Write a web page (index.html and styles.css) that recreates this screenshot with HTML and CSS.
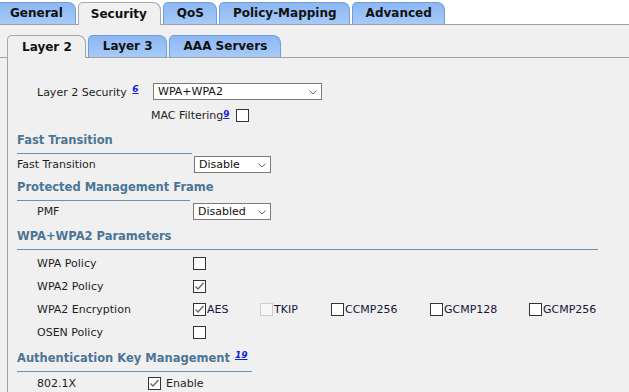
FILE: index.html
```html
<!DOCTYPE html>
<html>
<head>
<meta charset="utf-8">
<link rel="stylesheet" href="styles.css">
</head>
<body>
<div class="tabbar">
  <div class="tab first">General</div>
  <div class="tab active">Security</div>
  <div class="tab">QoS</div>
  <div class="tab">Policy-Mapping</div>
  <div class="tab">Advanced</div>
</div>
<div class="panel">
  <div class="subtabbar">
    <div class="stab active">Layer 2</div>
    <div class="stab">Layer 3</div>
    <div class="stab">AAA Servers</div>
  </div>
  <div class="content">
    <div class="row r-l2">
      <div class="lbl l2lbl">Layer 2 Security <a class="sup">6</a></div>
      <div class="select s-l2"><span>WPA+WPA2</span><svg class="chev" width="8" height="5" viewBox="0 0 8 5"><polyline points="0.5,0.5 4,4 7.5,0.5" fill="none" stroke="#666" stroke-width="1"/></svg></div>
    </div>
    <div class="row r-mac">
      <span class="mac">MAC Filtering<a class="sup">9</a></span>
      <span class="cb mac-cb"></span>
    </div>

    <div class="head h-short">Fast Transition</div>
    <div class="row r-sel">
      <div class="lbl w177">Fast Transition</div>
      <div class="select s-ft"><span>Disable</span><svg class="chev" width="8" height="5" viewBox="0 0 8 5"><polyline points="0.5,0.5 4,4 7.5,0.5" fill="none" stroke="#666" stroke-width="1"/></svg></div>
    </div>

    <div class="head h-short h-pmf">Protected Management Frame</div>
    <div class="row r-sel">
      <div class="lbl ind w176">PMF</div>
      <div class="select s-pmf"><span>Disabled</span><svg class="chev" width="8" height="5" viewBox="0 0 8 5"><polyline points="0.5,0.5 4,4 7.5,0.5" fill="none" stroke="#666" stroke-width="1"/></svg></div>
    </div>

    <div class="head h-long">WPA+WPA2 Parameters</div>
    <div class="checks">
      <div class="row r-chk">
        <div class="lbl ind w176">WPA Policy</div>
        <span class="cb"></span>
      </div>
      <div class="row r-chk">
        <div class="lbl ind w176">WPA2 Policy</div>
        <span class="cb checked"><svg width="11" height="11" viewBox="0 0 11 11"><polyline points="1.5,5.5 4,8 9.5,2" fill="none" stroke="#666" stroke-width="1.3"/></svg></span>
      </div>
      <div class="row r-chk">
        <div class="lbl ind w176">WPA2 Encryption</div>
        <div class="opt w67"><span class="cb checked"><svg width="11" height="11" viewBox="0 0 11 11"><polyline points="1.5,5.5 4,8 9.5,2" fill="none" stroke="#666" stroke-width="1.3"/></svg></span><span class="otext">AES</span></div>
        <div class="opt w71"><span class="cb disabled"></span><span class="otext">TKIP</span></div>
        <div class="opt w99"><span class="cb"></span><span class="otext">CCMP256</span></div>
        <div class="opt w99"><span class="cb"></span><span class="otext">GCMP128</span></div>
        <div class="opt"><span class="cb"></span><span class="otext">GCMP256</span></div>
      </div>
      <div class="row r-chk">
        <div class="lbl ind w176">OSEN Policy</div>
        <span class="cb"></span>
      </div>
    </div>

    <div class="head h-akm">Authentication Key Management <a class="sup hsup">19</a></div>
    <div class="row r-chk">
      <div class="lbl ind w131">802.1X</div>
      <span class="cb checked"><svg width="11" height="11" viewBox="0 0 11 11"><polyline points="1.5,5.5 4,8 9.5,2" fill="none" stroke="#666" stroke-width="1.3"/></svg></span>
      <span class="otext enable">Enable</span>
    </div>
  </div>
</div>
</body>
</html>
```

FILE: styles.css
```css
html, body {
  margin: 0;
  padding: 0;
}
body {
  font-family: "DejaVu Sans", Verdana, sans-serif;
  font-size: 11px;
  color: #1e1e1e;
  background: #f0f0f0;
  overflow: hidden;
}
.tabbar {
  height: 24px;
  background: #ffffff;
  border-bottom: 1px solid #a0a0a0;
  display: flex;
  align-items: flex-end;
  gap: 2px;
}
.tab {
  box-sizing: border-box;
  height: 22px;
  line-height: 21px;
  padding: 0 12px 0 13px;
  font-weight: bold;
  font-size: 12px;
  color: #111;
  background: linear-gradient(#8db7f3, #a7cbf8);
  border: 1px solid #6f9de0;
  border-bottom: none;
  border-radius: 5px 8px 0 0;
}
.tab.first {
  margin-left: -4px;
}
.tab.active {
  background: #f0f0f0;
  border-color: #a8a8a8;
  height: 23px;
  margin-bottom: -1px;
  line-height: 22px;
  padding: 0 13px 0 12px;
}
.panel {
  padding-top: 10px;
}
.subtabbar {
  display: flex;
  align-items: flex-end;
  gap: 2px;
  padding-left: 7px;
  height: 22px;
  border-bottom: 1px solid #a0a0a0;
}
.stab {
  box-sizing: border-box;
  height: 22px;
  line-height: 21px;
  padding: 0 13px 0 14px;
  font-weight: bold;
  font-size: 12px;
  color: #111;
  background: linear-gradient(#8db7f3, #a7cbf8);
  border: 1px solid #6f9de0;
  border-bottom: none;
  border-radius: 5px 8px 0 0;
}
.stab.active {
  background: #f0f0f0;
  border-color: #a8a8a8;
  height: 23px;
  margin-bottom: -1px;
  line-height: 22px;
}
.content {
  margin-left: 7px;
  border-left: 1px solid #a0a0a0;
  padding-left: 9px;
  padding-top: 25px;
  padding-bottom: 40px;
}
.row {
  display: flex;
  align-items: center;
}
.r-l2 {
  height: 17px;
}
.lbl {
  box-sizing: border-box;
  flex: none;
  white-space: nowrap;
}
.l2lbl {
  width: 136px;
  padding-left: 20px;
}
.ind {
  padding-left: 20px;
}
.w177 { width: 177px; }
.w176 { width: 176px; }
.w131 { width: 131px; }
.sup {
  font-size: 9px;
  font-weight: bold;
  font-style: italic;
  color: #0f22d6;
  text-decoration: underline;
  vertical-align: 4px;
  margin-left: 2px;
}
.mac .sup {
  margin-left: 0;
  font-style: normal;
  vertical-align: 2px;
}
.select {
  box-sizing: border-box;
  height: 17px;
  background: #fff;
  border: 1px solid #7a7a7a;
  display: flex;
  align-items: center;
  justify-content: space-between;
  padding: 0 4px 0 4px;
  color: #111;
}
.select span {
  line-height: 15px;
}
.chev {
  display: block;
  margin-top: 2px;
}
.s-l2 { width: 169px; }
.s-ft { width: 77px; }
.s-pmf { width: 78px; }
.r-mac {
  margin-top: 8px;
  height: 14px;
  padding-left: 134px;
}
.mac-cb {
  margin-left: 6px;
  width: 13px;
  height: 13px;
}
.cb {
  box-sizing: border-box;
  flex: none;
  display: inline-flex;
  align-items: center;
  justify-content: center;
  width: 13px;
  height: 13px;
  border: 1px solid #333;
  background: #fff;
}
.cb.disabled {
  border-color: #cdcdcd;
  background: #f6f6f6;
}
.cb svg {
  display: block;
}
.head {
  font-weight: bold;
  font-size: 11.5px;
  color: #4a7596;
  line-height: 14px;
  padding-bottom: 6px;
  border-bottom: 1px solid #6593b6;
  white-space: nowrap;
}
.h-short {
  width: 175px;
  margin-top: 11px;
}
.r-sel {
  height: 17px;
  margin-top: 2px;
}
.h-pmf {
  margin-top: 7px;
  width: 173px;
}
.h-long {
  margin-top: 9px;
  width: 581px;
}
.checks {
  margin-top: 2px;
}
.r-chk {
  height: 23px;
}
.opt {
  flex: none;
  display: flex;
  align-items: center;
}
.w67 { width: 67px; }
.w71 { width: 71px; }
.w99 { width: 99px; }
.otext {
  margin-left: 1px;
  color: #16163a;
}
.enable {
  margin-left: 5px;
  color: #1e1e1e;
}
.h-akm {
  margin-top: 4px;
  width: 235px;
}
.hsup {
  vertical-align: 4px;
  margin-left: 1px;
}
```
